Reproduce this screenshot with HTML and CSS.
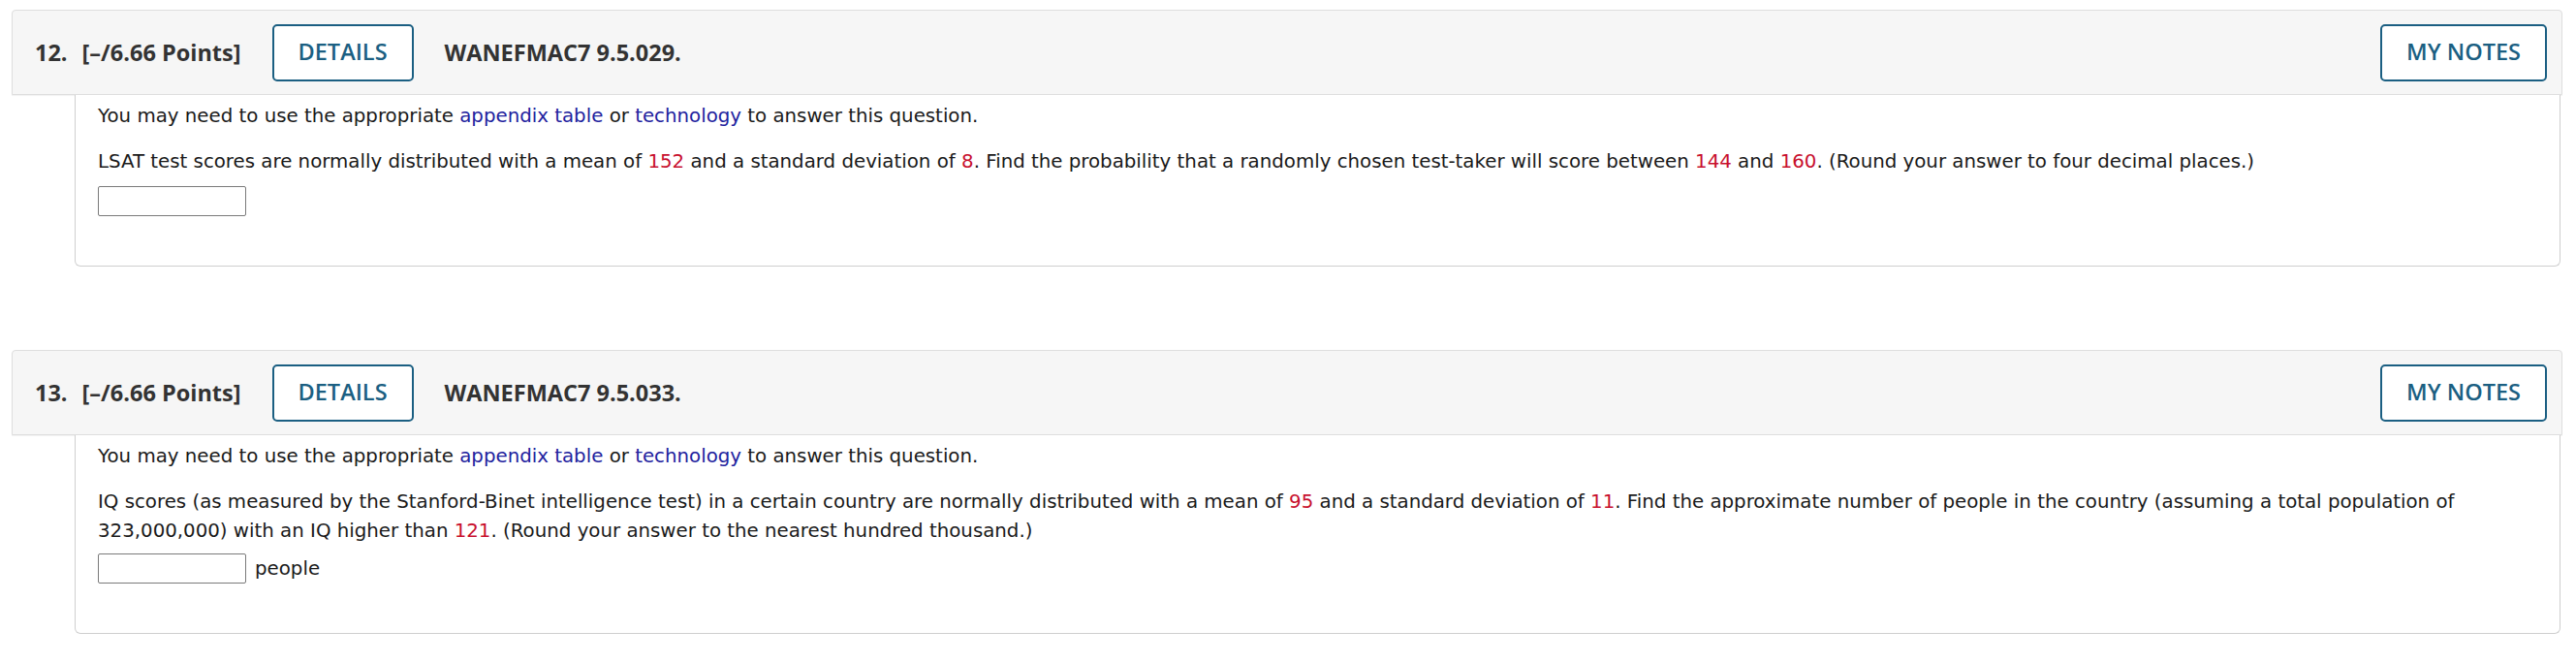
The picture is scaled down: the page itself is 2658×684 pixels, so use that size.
FILE: index.html
```html
<!DOCTYPE html>
<html>
<head>
<meta charset="utf-8">
<link rel="stylesheet" href="styles.css">
</head>
<body>
<div class="page">
  <section class="question">
    <div class="q-head">
      <span class="q-num">12.</span>
      <span class="q-points">[–/6.66 Points]</span>
      <button class="btn">DETAILS</button>
      <span class="q-code">WANEFMAC7 9.5.029.</span>
      <button class="btn btn-notes">MY NOTES</button>
    </div>
    <div class="q-body">
      <p class="para">You may need to use the appropriate <a class="link">appendix table</a> or <a class="link">technology</a> to answer this question.</p>
      <p class="para para-last">LSAT test scores are normally distributed with a mean of <span class="num">152</span> and a standard deviation of <span class="num">8</span>. Find the probability that a randomly chosen test-taker will score between <span class="num">144</span> and <span class="num">160</span>. (Round your answer to four decimal places.)</p>
      <div class="answer"><input class="ans-input" type="text"></div>
    </div>
  </section>

  <section class="question">
    <div class="q-head">
      <span class="q-num">13.</span>
      <span class="q-points">[–/6.66 Points]</span>
      <button class="btn">DETAILS</button>
      <span class="q-code">WANEFMAC7 9.5.033.</span>
      <button class="btn btn-notes">MY NOTES</button>
    </div>
    <div class="q-body">
      <p class="para">You may need to use the appropriate <a class="link">appendix table</a> or <a class="link">technology</a> to answer this question.</p>
      <p class="para para-last para-tight">IQ scores (as measured by the Stanford-Binet intelligence test) in a certain country are normally distributed with a mean of <span class="num">95</span> and a standard deviation of <span class="num">11</span>. Find the approximate number of people in the country (assuming a total population of 323,000,000) with an IQ higher than <span class="num">121</span>. (Round your answer to the nearest hundred thousand.)</p>
      <div class="answer"><input class="ans-input" type="text"><span class="unit">people</span></div>
    </div>
  </section>
</div>
</body>
</html>
```

FILE: styles.css
```css
html, body {
  margin: 0;
  padding: 0;
  background: #ffffff;
}

.page {
  padding: 10px 14px 0 12px;
  display: flex;
  flex-direction: column;
  gap: 86px;
}

.q-head {
  box-sizing: border-box;
  height: 88px;
  display: flex;
  align-items: center;
  padding: 0 15px 0 23px;
  background: #f6f6f6;
  border: 1px solid #dedede;
  border-radius: 4px 4px 0 0;
  box-shadow: 0 1px 1px rgba(0, 0, 0, 0.06);
  font-family: "Open Sans", "Liberation Sans", sans-serif;
  font-size: 23.5px;
  color: #333333;
}

.q-num {
  font-weight: 700;
  margin-right: 15px;
}

.q-points {
  font-weight: 700;
  margin-right: 32px;
}

.q-code {
  font-weight: 700;
  margin-left: 32px;
}

.btn {
  box-sizing: border-box;
  height: 59px;
  padding: 0 25px;
  background: #ffffff;
  border: 2px solid #1b5f82;
  border-radius: 5px;
  color: #1b5f82;
  font-family: "Open Sans", "Liberation Sans", sans-serif;
  font-size: 23.5px;
  font-weight: 600;
  line-height: 1;
}

.btn-notes {
  margin-left: auto;
}

.q-body {
  margin: 0 2px 0 65px;
  padding: 7px 23px 51px 23px;
  border: 1px solid #cfcfcf;
  border-top: none;
  border-radius: 0 0 6px 6px;
  background: #ffffff;
  font-family: "DejaVu Sans", Verdana, sans-serif;
  font-size: 19.8px;
  line-height: 30px;
  color: #1a1a1a;
}

.para {
  margin: 0 0 17px 0;
}

.para-last {
  margin-bottom: 10px;
}

.para-tight {
  margin-bottom: 8px;
}

.link {
  color: #22229e;
  text-decoration: none;
}

.num {
  color: #c8102e;
}

.answer {
  display: flex;
  align-items: center;
  gap: 9px;
}

.ans-input {
  box-sizing: border-box;
  width: 153px;
  height: 31px;
  margin: 0;
  padding: 2px 4px;
  border: 1px solid #7a7a7a;
  border-radius: 2px;
  background: #ffffff;
  font-family: "DejaVu Sans", Verdana, sans-serif;
  font-size: 19.8px;
}

.unit {
  line-height: 30px;
}
```
